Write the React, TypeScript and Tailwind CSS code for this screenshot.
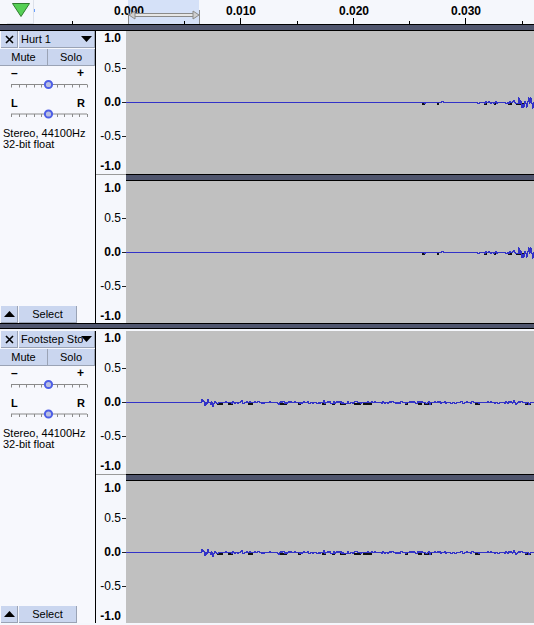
import React from 'react';

function rng(seed: number) {
  let s = seed;
  return () => {
    s |= 0;
    s = (s + 0x6d2b79f5) | 0;
    let t = Math.imul(s ^ (s >>> 15), 1 | s);
    t = (t + Math.imul(t ^ (t >>> 7), 61 | t)) ^ t;
    return ((t ^ (t >>> 14)) >>> 0) / 4294967296;
  };
}

type Seg = [number, number, number, number];

function wavePoints(seed: number, segs: Seg[]): string {
  const r = rng(seed);
  const pts: string[] = [];
  for (let x = 0; x <= 408; x++) {
    let amp = 0;
    let p = 0;
    for (const s of segs) if (x >= s[0] && x < s[1]) { amp = s[2]; p = s[3]; }
    let y = 71.5;
    if (amp > 0 && r() < p) {
      const v = r() * 2 - 1;
      y += Math.round(v * amp) || (v > 0 ? 1 : -1);
    }
    pts.push(`${x},${y}`);
  }
  return pts.join(' ');
}

function blackSegs(seed: number, from: number, to: number, n: number): [number, number][] {
  const r = rng(seed);
  const out: [number, number][] = [];
  for (let i = 0; i < n; i++) {
    const s = from + Math.floor(r() * (to - from));
    out.push([s, 2 + Math.floor(r() * 6)]);
  }
  return out;
}

const HURT_SEGS: Seg[] = [
  [293, 300, 1, 0.35],
  [309, 318, 1, 0.35],
  [352, 372, 1, 0.4],
  [380, 393, 2, 0.6],
  [393, 408, 6, 0.95],
];
const HURT_BLACK: [number, number][] = [
  [296, 3], [311, 2], [358, 3], [368, 2], [382, 4], [390, 8],
];
const FOOT_SEGS: Seg[] = [
  [76, 80, 3, 0.8],
  [80, 88, 4, 0.8],
  [88, 96, 2, 0.6],
  [96, 408, 1.6, 0.4],
];
const FOOT_BLACK = [
  [91, 6], [102, 5], [122, 5], [152, 9], [172, 3], [196, 4], [237, 6],
  ...blackSegs(7, 170, 405, 14),
] as [number, number][];

function Wave({ points, blacks, h }: { points: string; blacks: [number, number][]; h: number }) {
  return (
    <svg width="408" height={h} className="block" shapeRendering="crispEdges">
      {blacks.map(([x, w], i) => (
        <rect key={i} x={x} y={72} width={w} height={1.5} fill="#111" />
      ))}
      <polyline points={points} fill="none" stroke="#3232c8" strokeWidth="1" />
    </svg>
  );
}

function VRuler() {
  const labels: { t: string; top: number; bold: boolean }[] = [
    { t: '1.0', top: 0, bold: true },
    { t: '0.5', top: 30, bold: false },
    { t: '0.0', top: 64, bold: true },
    { t: '-0.5', top: 98, bold: false },
    { t: '-1.0', top: 128, bold: true },
  ];
  return (
    <div className="relative w-[30px] h-full bg-[#f5f7fc] text-[12px] leading-[14px] text-black">
      {labels.map((l) => (
        <span
          key={l.t}
          className={`absolute right-[5px] ${l.bold ? 'font-bold' : 'font-normal'}`}
          style={{ top: l.top }}
        >
          {l.t}
        </span>
      ))}
      {[37, 71, 105].map((y) => (
        <div key={y} className="absolute right-0 w-[4px] h-px bg-[#222]" style={{ top: y }} />
      ))}
    </div>
  );
}

function Channel({ points, blacks, h }: { points: string; blacks: [number, number][]; h: number }) {
  return (
    <div className={`flex shrink-0 ${h === 143 ? 'h-[143px]' : 'h-[142px]'}`}>
      <VRuler />
      <div className="flex-1 bg-[#c0c0c0] overflow-hidden">
        <Wave points={points} blacks={blacks} h={h} />
      </div>
    </div>
  );
}

function ChannelSep() {
  return (
    <div className="flex h-[7px] shrink-0">
      <div className="w-[30px] bg-[#f5f7fc] border-t border-[#9a9a9a]" />
      <div className="flex-1 bg-[#50566e] border-y border-black" />
    </div>
  );
}

function SliderSvg({ lineY }: { lineY: number }) {
  const ticks = Array.from({ length: 11 }, (_, i) => 11 + i * 7.6);
  return (
    <svg width="95" height="10" className="block overflow-visible">
      <line x1="11" y1={lineY} x2="87" y2={lineY} stroke="#8a8a8a" strokeWidth="1" />
      {ticks.map((t) => (
        <line key={t} x1={Math.round(t) + 0.5} y1={lineY} x2={Math.round(t) + 0.5} y2={lineY + 3} stroke="#8a8a8a" strokeWidth="1" />
      ))}
      <circle cx="48.5" cy={lineY} r="3.6" fill="#b9bde0" stroke="#4d5ee6" strokeWidth="2" />
    </svg>
  );
}

function LeftPanel({ name }: { name: string }) {
  return (
    <div className="w-[95px] h-full flex flex-col bg-[#f7f8fd] text-[11px] text-black">
      <div className="flex h-[17px] shrink-0 gap-[1px]">
        <div className="w-[17px] ml-[1px] bg-[#cad6ef] border-r border-b border-[#9aa3b5] flex items-center justify-center">
          <svg width="9" height="9">
            <path d="M1 1 L8 8 M8 1 L1 8" stroke="#000" strokeWidth="1.6" />
          </svg>
        </div>
        <div className="flex-1 bg-[#cad6ef] border-r border-b border-[#9aa3b5] flex items-center relative">
          <span className="ml-[2px] w-[62px] overflow-hidden whitespace-nowrap leading-[16px]">{name}</span>
          <svg width="11" height="6" className="absolute right-[2px] top-[5px]">
            <path d="M0 0 L11 0 L5.5 6 Z" fill="#000" />
          </svg>
        </div>
      </div>
      <div className="flex h-[17px] mt-[1px] shrink-0">
        <div className="w-[48px] bg-[#cad6ef] border-r border-b border-[#9aa3b5] flex items-center justify-center leading-[16px]">Mute</div>
        <div className="flex-1 bg-[#cad6ef] border-r border-b border-[#9aa3b5] flex items-center justify-center leading-[16px]">Solo</div>
      </div>
      <div className="flex justify-between h-[14px] px-[11px] text-[12px] leading-[14px] font-bold text-black">
        <span>–</span>
        <span>+</span>
      </div>
      <SliderSvg lineY={4.5} />
      <div className="h-[7px]" />
      <div className="flex justify-between h-[13px] px-[11px] text-[11px] leading-[13px] font-bold">
        <span>L</span>
        <span className="mr-[-1px]">R</span>
      </div>
      <SliderSvg lineY={4} />
      <div className="h-[8px]" />
      <div className="ml-[3px] leading-[11px]">
        <div>Stereo, 44100Hz</div>
        <div>32-bit float</div>
      </div>
      <div className="mt-auto flex h-[17px] shrink-0 gap-[1px]">
        <div className="w-[17px] ml-[1px] bg-[#cad6ef] border-r border-b border-[#9aa3b5] flex items-center justify-center">
          <svg width="11" height="6">
            <path d="M0 6 L11 6 L5.5 0 Z" fill="#000" />
          </svg>
        </div>
        <div className="w-[58px] bg-[#cad6ef] border-r border-b border-[#9aa3b5] flex items-center justify-center leading-[16px]">Select</div>
      </div>
    </div>
  );
}

function Track({ name, points, blacks }: { name: string; points: string; blacks: [number, number][] }) {
  return (
    <div className="flex h-[292px] shrink-0">
      <LeftPanel name={name} />
      <div className="w-px bg-black" />
      <div className="flex-1 flex flex-col">
        <Channel points={points} blacks={blacks} h={143} />
        <ChannelSep />
        <Channel points={points} blacks={blacks} h={142} />
      </div>
    </div>
  );
}

function TimeRuler() {
  const majors = [
    { x: 128, t: '0.000' },
    { x: 240, t: '0.010' },
    { x: 353, t: '0.020' },
    { x: 465, t: '0.030' },
  ];
  const minors = [72, 184, 297, 409, 522];
  return (
    <div className="relative h-[24px] shrink-0 bg-[#f5f7fc] overflow-hidden">
      <div className="absolute left-[128px] top-0 w-[71px] h-full bg-[#d5e1f8]" />
      <div className="absolute left-[7px] top-0 w-[27px] h-[24px] border-r border-b border-[#dde1ea]" />
      <svg width="20" height="16" className="absolute left-[11px] top-[2px]">
        <path d="M1.5 1.5 L18.5 1.5 L10 14.5 Z" fill="#55d055" stroke="#2f7d2f" strokeWidth="1" />
      </svg>
      <div className="absolute left-[34px] top-[9px] w-px h-[3px] bg-[#6aa0ff]" />
      {majors.map((m) => (
        <React.Fragment key={m.t}>
          <span
            className="absolute top-[4px] text-[12px] leading-[14px] font-bold text-black -translate-x-1/2"
            style={{ left: m.x + 1 }}
          >
            {m.t}
          </span>
          <div className="absolute top-[18px] w-px h-[6px] bg-black" style={{ left: m.x }} />
        </React.Fragment>
      ))}
      {minors.map((x) => (
        <div key={x} className="absolute top-[21px] w-px h-[3px] bg-black" style={{ left: x }} />
      ))}
      <svg width="74" height="14" className="absolute left-[127px] top-[10px]" shapeRendering="crispEdges">
        <line x1="1.5" y1="0" x2="1.5" y2="14" stroke="#8a8a8a" />
        <line x1="72.5" y1="0" x2="72.5" y2="14" stroke="#8a8a8a" />
        <rect x="7.5" y="3.5" width="59" height="3" fill="#e6e6e6" stroke="#8a8a8a" />
        <path d="M2 5 L8 1 L8 9 Z" fill="#cfcfcf" stroke="#8a8a8a" shapeRendering="auto" />
        <path d="M72 5 L66 1 L66 9 Z" fill="#cfcfcf" stroke="#8a8a8a" shapeRendering="auto" />
      </svg>
    </div>
  );
}

export default function App() {
  const hurt = wavePoints(11, HURT_SEGS);
  const foot = wavePoints(23, FOOT_SEGS);
  return (
    <div className="w-[534px] h-[625px] overflow-hidden bg-[#f5f7fc] flex flex-col font-['Liberation_Sans',Arial,sans-serif]">
      <TimeRuler />
      <div className="h-[7px] shrink-0 bg-[#50566e] border-y border-black" />
      <Track name="Hurt 1" points={hurt} blacks={HURT_BLACK} />
      <div className="h-[6px] shrink-0 bg-[#50566e] border-y border-black" />
      <div className="h-[2px] shrink-0 bg-[#f5f7fc]" />
      <Track name="Footstep Stone" points={foot} blacks={FOOT_BLACK} />
    </div>
  );
}
